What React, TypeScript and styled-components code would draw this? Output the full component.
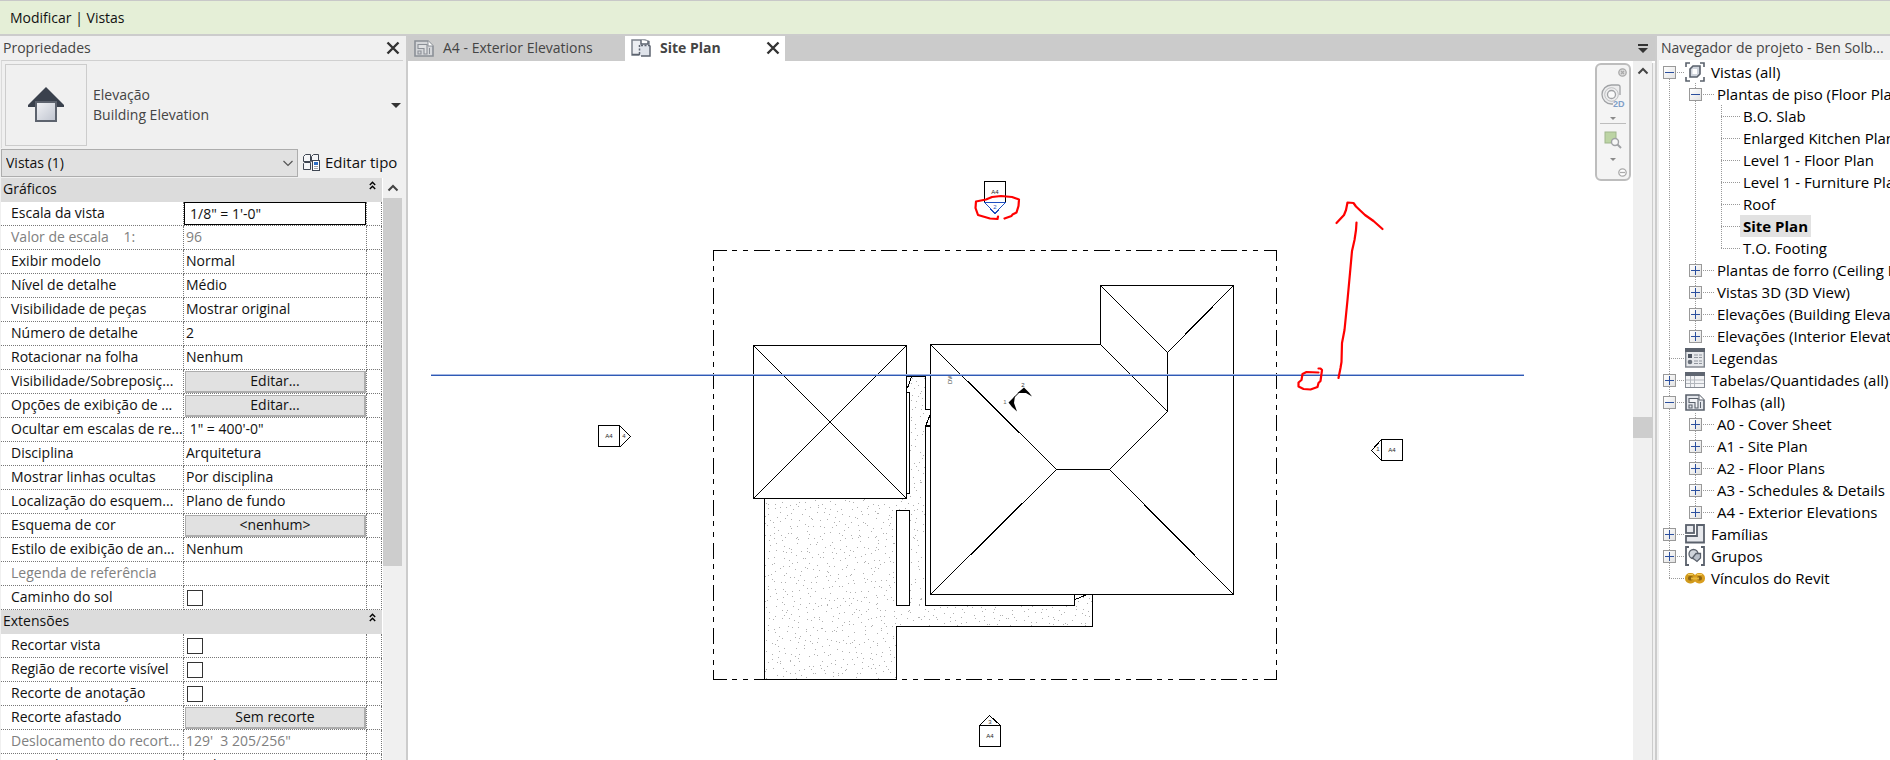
import React from "react";
import styled, { createGlobalStyle, css } from "styled-components";

const GlobalStyle = createGlobalStyle`
  *, *::before, *::after { box-sizing: border-box; }
  body { margin: 0; overflow: hidden; background: #f0f0f0; }
  body, button, input, select, table {
    font-family: "Open Sans", "Noto Sans", "Liberation Sans", sans-serif;
    font-size: 14px;
    line-height: 20px;
    color: #111;
  }
  button, input, select { margin: 0; padding: 0; border-radius: 0; }
  button { border: 0; background: none; }
  ul { list-style: none; margin: 0; padding: 0; }
  svg { display: block; flex: none; }
`;

/* ---------- shell ---------- */

const Shell = styled.div`
  display: flex;
  flex-direction: column;
  height: 100vh;
`;

const ContextBar = styled.header`
  flex: none;
  height: 36px;
  padding: 0 10px;
  display: flex;
  align-items: center;
  background: #e5efd7;
  border-top: 1px solid #c8c8c8;
  border-bottom: 2px solid #cccccc;
`;

const Workspace = styled.div`
  flex: 1;
  min-height: 0;
  display: flex;
`;

const PanelTitle = styled.h2`
  flex: none;
  margin: 0;
  height: 24px;
  display: flex;
  align-items: center;
  justify-content: space-between;
  font-size: 14px;
  font-weight: 400;
  color: #444;
  white-space: nowrap;
`;

const IconButton = styled.button`
  display: flex;
  align-items: center;
  justify-content: center;
  width: 20px;
  height: 20px;
`;

/* ---------- properties ---------- */

const Properties = styled.aside`
  flex: none;
  width: 408px;
  display: flex;
  flex-direction: column;
  background: #f0f0f0;
  border-right: 2px solid #cccccc;

  ${PanelTitle} { padding: 0 3px; }
`;

const TypeSelector = styled.div`
  flex: none;
  height: 88px;
  margin: 0 3px 0 1px;
  padding: 3px 0 0 3px;
  display: flex;
  align-items: flex-start;
  border-top: 1px solid #d0d0d0;
  border-left: 1px solid #dadada;
`;

const Preview = styled.div`
  width: 82px;
  height: 82px;
  display: flex;
  align-items: center;
  justify-content: center;
  border: 1px solid #cccccc;
`;

const TypeName = styled.div`
  flex: 1;
  padding: 21px 0 0 6px;
  color: #444;
`;

const TypeDrop = styled(IconButton)`
  margin-top: 31px;
  margin-right: -3px;
`;

const FilterRow = styled.div`
  flex: none;
  display: flex;
  align-items: center;
  height: 30px;
  padding: 1px 8px 1px 1px;
  gap: 5px;
`;

const SelectWrap = styled.label`
  position: relative;
  flex: 1;
  height: 28px;

  svg { position: absolute; right: 5px; top: 11px; pointer-events: none; }
`;

const FilterSelect = styled.select`
  appearance: none;
  width: 100%;
  height: 28px;
  padding: 0 24px 0 4px;
  background: #e1e1e1;
  border: 1px solid #adadad;
`;

const EditType = styled.button`
  display: flex;
  align-items: center;
  gap: 5px;
  width: 95px;
  padding-bottom: 2px;
  font-size: 15px;
  white-space: nowrap;
`;

const GridArea = styled.div`
  flex: 1;
  min-height: 0;
  display: flex;
  padding-left: 1px;
  padding-right: 4px;
  overflow: hidden;
`;

const GridScroll = styled.div`
  flex: 1;
  min-width: 0;
  overflow: hidden;
`;

const PropTable = styled.table`
  width: 100%;
  table-layout: fixed;
  border-collapse: separate;
  border-spacing: 0;
  background: #fff;
`;

const GroupCell = styled.th`
  height: 24px;
  padding: 0 6px 2px 2px;
  background: #dcdcdc;
  font-weight: 400;
  text-align: left;

  div { display: flex; justify-content: space-between; align-items: center; }
  button { width: auto; height: 16px; align-items: flex-start; }
`;

const dotted = css`
  border-right: 1px dotted #777;
  border-bottom: 1px dotted #777;
`;

const NameCell = styled.th<{ $muted?: boolean }>`
  ${dotted}
  height: 24px;
  padding: 0 0 2px 10px;
  font-weight: 400;
  text-align: left;
  white-space: pre;
  overflow: hidden;
  color: ${(p) => (p.$muted ? "#808080" : "#111")};
`;

const valuePadding = { text: "0 0 2px 2px", check: "0 0 0 2px", button: "0", input: "0" };

const ValueCell = styled.td<{ $muted?: boolean; $kind: Kind }>`
  ${dotted}
  height: 24px;
  padding: ${(p) => valuePadding[p.$kind]};
  white-space: pre;
  overflow: hidden;
  color: ${(p) => (p.$muted ? "#808080" : "#111")};
`;

const LinkCell = styled.td`
  ${dotted}
  height: 24px;
  padding: 0;
`;

const ScaleInput = styled.input`
  display: block;
  width: 100%;
  height: 23px;
  padding: 0 5px;
  border: 1px solid #000;
  outline: none;
  background: #fff;
`;

const CellButton = styled.button`
  display: block;
  width: calc(100% - 1px);
  height: 22px;
  margin-left: 1px;
  background: #e1e1e1;
  border: solid #adadad;
  border-width: 1px 2px 2px 1px;
  line-height: 18px;
`;

const CheckBox = styled.input`
  appearance: none;
  display: block;
  width: 16px;
  height: 16px;
  margin: 0 0 0 1px;
  border: 1px solid #333;
  background: #fff;
`;

/* ---------- scroll bars ---------- */

const ScrollTrack = styled.div`
  flex: none;
  width: 20px;
  display: flex;
  flex-direction: column;
  background: #f0f0f0;
  border-left: 1px solid #fff;
`;

const Thumb = styled.div<{ $grow?: number }>`
  min-height: 21px;
  flex: ${(p) => p.$grow ?? 0} 0 0;
  background: #cdcdcd;
`;

const TrackSpace = styled.div<{ $grow: number }>`
  flex: ${(p) => p.$grow} 0 0;
`;

/* ---------- drawing area ---------- */

const Documents = styled.main`
  flex: 1;
  min-width: 0;
  display: flex;
  flex-direction: column;
`;

const TabBar = styled.div`
  flex: none;
  height: 25px;
  display: flex;
  align-items: stretch;
  background: #cbcbcb;
`;

const Tab = styled.button<{ $active?: boolean }>`
  display: flex;
  align-items: center;
  gap: 9px;
  padding: 0 0 1px 6px;
  white-space: nowrap;
  color: #444;
  width: ${(p) => (p.$active ? "135px" : "217px")};
  background: ${(p) => (p.$active ? "#fff" : "transparent")};
  font-weight: ${(p) => (p.$active ? 700 : 400)};
`;

const TabClose = styled(IconButton)`
  width: 25px;
  height: 25px;
  padding-bottom: 1px;
  background: #fff;
`;

const TabMenu = styled(IconButton)`
  margin: 3px 2px 0 auto;
`;

const View = styled.div`
  flex: 1;
  min-height: 0;
  display: flex;
  background: #fff;
`;

const Canvas = styled.div`
  position: relative;
  flex: 1;
  min-width: 0;
`;

const Plan = styled.svg`
  width: 100%;
  height: 100%;

  text { font-family: "Liberation Sans", sans-serif; }
`;

const ViewEdge = styled.div`
  flex: none;
  width: 3px;
  margin-top: 2px;
  border-left: 1px solid #cccccc;
  background: #f0f0f0;
`;

const NavigationBar = styled.nav`
  position: absolute;
  top: 2px;
  right: 1px;
  width: 36px;
  height: 118px;
  padding: 3px 2px;
  display: flex;
  flex-direction: column;
  align-items: center;
  background: #f4f4f4;
  border: 2px solid #bdbdbd;
  border-radius: 6px;
`;

const NavButton = styled.button<{ $h: number; $end?: boolean }>`
  display: flex;
  justify-content: center;
  align-items: center;
  height: ${(p) => p.$h}px;
  flex: none;
  align-self: ${(p) => (p.$end ? "flex-end" : "center")};
`;

const NavRule = styled.hr`
  width: 26px;
  margin: 0;
  border: 0;
  border-top: 1px solid #bdbdbd;
`;

/* ---------- project browser ---------- */

const Browser = styled.aside`
  flex: none;
  width: 235px;
  display: flex;
  flex-direction: column;
  background: #f0f0f0;
  border-left: 2px solid #cccccc;
  overflow: hidden;

  ${PanelTitle} { padding-left: 4px; }
`;

const Tree = styled.ul`
  flex: 1;
  margin-left: 2px;
  padding-top: 1px;
  font-size: 15px;
  background: #fff;
`;

const TreeRow = styled.li`
  display: flex;
  align-items: center;
  height: 22px;
  white-space: nowrap;
`;

const vDots = "repeating-linear-gradient(to bottom, #999 0 1px, transparent 1px 2px)";
const hDots = "repeating-linear-gradient(to right, #999 0 1px, transparent 1px 2px)";

type GuideKind = "pass" | "tee" | "last" | "first";

const guideImage: Record<GuideKind, string> = {
  pass: `${vDots} 10px 0 / 1px 22px no-repeat`,
  tee: `${vDots} 10px 0 / 1px 22px no-repeat, ${hDots} 10px 11px / 100% 1px no-repeat`,
  last: `${vDots} 10px 0 / 1px 12px no-repeat, ${hDots} 10px 11px / 100% 1px no-repeat`,
  first: `${vDots} 10px 12px / 1px 10px no-repeat, ${hDots} 10px 11px / 100% 1px no-repeat`,
};

const Guide = styled.span<{ $kind: GuideKind; $wide?: boolean }>`
  flex: none;
  display: flex;
  align-items: center;
  width: ${(p) => (p.$wide ? 29 : 26)}px;
  height: 22px;
  padding-left: 4px;
  background: ${(p) => guideImage[p.$kind]};
`;

const Expander = styled.button`
  width: 13px;
  height: 13px;
  margin-top: 1px;
  display: flex;
  align-items: center;
  justify-content: center;
  border: 1px solid #999;
  background: linear-gradient(135deg, #fff, #e2e2e2);
`;

const NodeLabel = styled.span<{ $selected?: boolean; $root?: boolean }>`
  height: 22px;
  padding: 0 3px;
  margin-left: ${(p) => (p.$root ? 3 : 0)}px;
  line-height: 22px;
  color: #000;
  background: ${(p) => (p.$selected ? "#e2e2e2" : "transparent")};
  font-weight: ${(p) => (p.$selected ? 700 : 400)};
`;

/* ---------- icons ---------- */

const CloseIcon = () => (
  <svg width="14" height="14" viewBox="0 0 14 14" fill="none" stroke="#333" strokeWidth="2.4">
    <path d="M1.5 1.5 12.5 12.5M12.5 1.5 1.5 12.5" />
  </svg>
);

const CaretIcon = ({ size = 10, color = "#333" }: { size?: number; color?: string }) => (
  <svg width={size} height={size / 2} viewBox="0 0 10 5" fill={color}>
    <path d="M0 0H10L5 5Z" />
  </svg>
);

const UpIcon = () => (
  <svg width="12" height="8" viewBox="0 0 12 8" fill="none" stroke="#444" strokeWidth="2">
    <path d="M1.5 6.5 6 2 10.5 6.5" />
  </svg>
);

const CollapseIcon = () => (
  <svg width="7" height="9" viewBox="0 0 7 9" fill="none" stroke="#000" strokeWidth="1.4">
    <path d="M.8 4 3.5 1.3 6.2 4M.8 8 3.5 5.3 6.2 8" />
  </svg>
);

const HouseIcon = () => (
  <svg width="38" height="38" viewBox="0 0 38 38">
    <defs>
      <linearGradient id="wall" x1="0" y1="0" x2="1" y2="1">
        <stop offset="0" stopColor="#f2f3f6" />
        <stop offset="1" stopColor="#bfc4cf" />
      </linearGradient>
    </defs>
    <path d="M19 1 37 19V21H1V19Z" fill="#3a414d" />
    <rect x="9" y="16" width="20" height="19" fill="url(#wall)" stroke="#5d636e" strokeWidth="2" />
  </svg>
);

const EditTypeIcon = () => (
  <svg width="17" height="17" viewBox="0 0 17 17" fill="#f5f6f8" stroke="#3f4652" strokeWidth="1">
    <path d="M.5 2.5 2.5.5H7.5V7.5H.5ZM8.5 2.5 10.5.5H15.5V7.5H8.5ZM.5 9.5 1.5 8.5H7.5V15.5H.5Z" />
    <rect x="9.5" y="6.5" width="7" height="10" fill="#fff" />
    <rect x="11" y="8" width="4" height="3" fill="#2f6fc4" stroke="none" />
    <path d="M11.5 12.5H12.5M13.5 12.5H14.5M11.5 14.5H12.5M13.5 14.5H14.5" />
  </svg>
);

const SheetIcon = ({ muted }: { muted?: boolean }) => {
  const c = muted ? "#8b9097" : "#5a616c";
  return (
    <svg width="20" height="17" viewBox="0 0 20 17" fill="none">
      <path d="M1 1H14L19 6V16H1Z" fill={muted ? "#d4d6d9" : "#e4e7ec"} stroke={c} strokeWidth="1.6" />
      <path d="M14 1V6H19" fill="#fff" stroke={c} />
      <path d="M4 4.5H13V14H10V8.500H4Z" stroke={c} strokeWidth="1.1" fill={muted ? "#dfe1e3" : "#f3f4f7"} />
      <path d="M4 11H7V14H4Z" stroke={c} strokeWidth="1.1" />
      <path d="M15.5 8V14" stroke={c} />
    </svg>
  );
};

const PlanIcon = () => (
  <svg width="20" height="18" viewBox="0 0 20 18" fill="#f1f3f6" stroke="#5d6470" strokeWidth="1.5">
    <path d="M1 1H14L18 2.5V16H1Z" stroke="#7b818b" fill="#eceef2" />
    <path d="M8 5.5H19V17H8Z" fill="#dfe3ea" stroke="none" />
    <path d="M1 15.5H9M10 17H19V6.5" fill="none" />
    <path d="M10 1V5H17V2" fill="#fff" />
    <path d="M8.5 6V16" strokeDasharray="2 1.5" />
    <path d="M10 6.5H19" strokeDasharray="2 1.5" />
  </svg>
);

const ViewsIcon = () => (
  <svg width="20" height="20" viewBox="0 0 20 20" fill="none" stroke="#5a616c" strokeWidth="1.6">
    <path d="M1 5V1H5M15 1H19V5M19 15V19H15M5 19H1V15" />
    <path d="M5 7 8 4H15V12L12 15H5Z" fill="#cfd4dc" />
    <path d="M7.5 7H12V12H7.5Z" fill="#fff" stroke="none" />
  </svg>
);

const LegendIcon = () => (
  <svg width="20" height="20" viewBox="0 0 20 20">
    <rect x=".7" y="1" width="18.6" height="18" fill="#e6e8eb" stroke="#7c828b" strokeWidth="1.4" />
    <path d="M0 0H20V4H0Z" fill="#5a616c" />
    <rect x="3" y="6" width="4" height="4" fill="#4d5460" />
    <circle cx="5" cy="14" r="2.3" fill="#6b727c" />
    <path d="M9 7H17M9 9.5H17M9 13H17M9 15.5H17" stroke="#90959d" strokeDasharray="4 1" />
  </svg>
);

const ScheduleIcon = () => (
  <svg width="20" height="16" viewBox="0 0 20 16">
    <rect x=".5" y=".5" width="19" height="15" fill="#f3f4f6" stroke="#858a92" />
    <path d="M0 0H20V4H0Z" fill="#5f6671" />
    <path d="M5.5 4V15M9.5 4V15M1 8H19M1 11.5H19" stroke="#b3b7bd" />
  </svg>
);

const FamilyIcon = () => (
  <svg width="20" height="20" viewBox="0 0 20 20" fill="#e7e9ed" stroke="#5a616c" strokeWidth="1.8">
    <rect x="1" y="1" width="8" height="8" />
    <path d="M12 1H19V18.5H1V12H12Z" />
  </svg>
);

const GroupIcon = () => (
  <svg width="20" height="20" viewBox="0 0 20 20" fill="none" stroke="#5a616c" strokeWidth="1.8">
    <path d="M4 1H1V19H4M16 1H19V19H16" />
    <circle cx="8.5" cy="8" r="4.5" fill="#cfd4dc" strokeWidth="1.3" />
    <path d="M11 7.5H15.5V12L12 15.5 7.500 12Z" fill="#b9c0cb" strokeWidth="1.3" />
  </svg>
);

const LinkIcon = () => (
  <svg width="20" height="11" viewBox="0 0 20 11" fill="none">
    <rect x="1.5" y="1.5" width="8" height="7.5" rx="3.5" fill="#8d6412" stroke="#d09a1c" strokeWidth="3" />
    <rect x="10.5" y="1.5" width="8" height="7.5" rx="3.5" fill="#8d6412" stroke="#d99e1f" strokeWidth="3" />
    <path d="M6 5.5H14" stroke="#e8b93a" strokeWidth="2" />
    <path d="M3 1.5H8M12 1.5H17" stroke="#f4cf5d" />
  </svg>
);

const Sign = ({ open }: { open: boolean }) => (
  <svg width="11" height="11" viewBox="0 0 11 11" stroke="#2b4f9e" strokeWidth="1" shapeRendering="crispEdges">
    <path d={open ? "M1 5.5H10" : "M1 5.5H10M5.5 1V10"} />
  </svg>
);

const TabMenuIcon = () => (
  <svg width="10" height="10" viewBox="0 0 10 10" fill="#333">
    <path d="M0 0H10V2H0ZM0 4H10L5 9Z" />
  </svg>
);

const RoundIcon = ({ minus }: { minus?: boolean }) => (
  <svg width="9" height="9" viewBox="0 0 9 9" fill="none" stroke="#aaa" strokeWidth="1.3">
    <circle cx="4.5" cy="4.5" r="3.7" fill={minus ? "#fff" : "#ddd"} />
    <path d={minus ? "M2 4.5H7" : "M3 3 6 6M6 3 3 6"} />
  </svg>
);

const WheelIcon = () => (
  <svg width="24" height="24" viewBox="0 0 24 24" fill="none" stroke="#a0a2a5" strokeWidth="1.3">
    <path d="M19 11V3Q19 1 17 1H10.500A9.500 9.500 0 1 0 10.500 20H12" fill="#ededee" />
    <circle cx="10.500" cy="10.500" r="4" fill="#fafafa" />
    <circle cx="10.500" cy="10.500" r="6.800" strokeWidth=".6" />
    <text x="12" y="23" fill="#7f9fc8" stroke="none" fontFamily="Liberation Sans" fontWeight="700" fontSize="9">2D</text>
  </svg>
);

const ZoomRegionIcon = () => (
  <svg width="18" height="18" viewBox="0 0 18 18" fill="none">
    <rect x="1" y="1" width="11" height="11" fill="#bcd4a4" stroke="#9fb68c" />
    <circle cx="11" cy="11" r="3.5" fill="#f7f7f7" stroke="#a0a2a5" strokeWidth="1.4" />
    <path d="M13.5 13.5 17 17" stroke="#a0a2a5" strokeWidth="2" />
  </svg>
);

/* ---------- data ---------- */

type Kind = "text" | "input" | "button" | "check";
type Prop = { name: string; value?: string; kind?: Kind; muted?: boolean };

const groups: { title: string; items: Prop[] }[] = [
  {
    title: "Gráficos",
    items: [
      { name: "Escala da vista", value: "1/8\" = 1'-0\"", kind: "input" },
      { name: "Valor de escala    1:", value: "96", muted: true },
      { name: "Exibir modelo", value: "Normal" },
      { name: "Nível de detalhe", value: "Médio" },
      { name: "Visibilidade de peças", value: "Mostrar original" },
      { name: "Número de detalhe", value: "2" },
      { name: "Rotacionar na folha", value: "Nenhum" },
      { name: "Visibilidade/Sobreposiç...", value: "Editar...", kind: "button" },
      { name: "Opções de exibição de ...", value: "Editar...", kind: "button" },
      { name: "Ocultar em escalas de re...", value: " 1\" = 400'-0\"" },
      { name: "Disciplina", value: "Arquitetura" },
      { name: "Mostrar linhas ocultas", value: "Por disciplina" },
      { name: "Localização do esquem...", value: "Plano de fundo" },
      { name: "Esquema de cor", value: "<nenhum>", kind: "button" },
      { name: "Estilo de exibição de an...", value: "Nenhum" },
      { name: "Legenda de referência", value: "", muted: true },
      { name: "Caminho do sol", kind: "check" },
    ],
  },
  {
    title: "Extensões",
    items: [
      { name: "Recortar vista", kind: "check" },
      { name: "Região de recorte visível", kind: "check" },
      { name: "Recorte de anotação", kind: "check" },
      { name: "Recorte afastado", value: "Sem recorte", kind: "button" },
      { name: "Deslocamento do recort...", value: "129'  3 205/256\"", muted: true },
      { name: "Caixa de escopo", value: "Nenhum" },
    ],
  },
];

type Node = {
  label: string;
  guides: GuideKind[];
  open?: boolean;
  icon?: React.ReactNode;
  selected?: boolean;
};

const nodes: Node[] = [
  { label: "Vistas (all)", guides: ["first"], open: true, icon: <ViewsIcon /> },
  { label: "Plantas de piso (Floor Plan)", guides: ["pass", "tee"], open: true },
  { label: "B.O. Slab", guides: ["pass", "pass", "tee"] },
  { label: "Enlarged Kitchen Plan", guides: ["pass", "pass", "tee"] },
  { label: "Level 1 - Floor Plan", guides: ["pass", "pass", "tee"] },
  { label: "Level 1 - Furniture Plan", guides: ["pass", "pass", "tee"] },
  { label: "Roof", guides: ["pass", "pass", "tee"] },
  { label: "Site Plan", guides: ["pass", "pass", "tee"], selected: true },
  { label: "T.O. Footing", guides: ["pass", "pass", "last"] },
  { label: "Plantas de forro (Ceiling Plan)", guides: ["pass", "tee"], open: false },
  { label: "Vistas 3D (3D View)", guides: ["pass", "tee"], open: false },
  { label: "Elevações (Building Elevation)", guides: ["pass", "tee"], open: false },
  { label: "Elevações (Interior Elevation)", guides: ["pass", "last"], open: false },
  { label: "Legendas", guides: ["tee"], icon: <LegendIcon /> },
  { label: "Tabelas/Quantidades (all)", guides: ["tee"], open: false, icon: <ScheduleIcon /> },
  { label: "Folhas (all)", guides: ["tee"], open: true, icon: <SheetIcon /> },
  { label: "A0 - Cover Sheet", guides: ["pass", "tee"], open: false },
  { label: "A1 - Site Plan", guides: ["pass", "tee"], open: false },
  { label: "A2 - Floor Plans", guides: ["pass", "tee"], open: false },
  { label: "A3 - Schedules & Details", guides: ["pass", "tee"], open: false },
  { label: "A4 - Exterior Elevations", guides: ["pass", "last"], open: false },
  { label: "Famílias", guides: ["tee"], open: false, icon: <FamilyIcon /> },
  { label: "Grupos", guides: ["tee"], open: false, icon: <GroupIcon /> },
  { label: "Vínculos do Revit", guides: ["last"], icon: <LinkIcon /> },
];

/* ---------- site plan ---------- */

// Concrete hatch: one dot per cell of a jittered grid, from a fixed seed.
function stipple(x0: number, y0: number, x1: number, y1: number, step: number) {
  let seed = 7;
  const next = () => {
    seed = (seed * 1103515245 + 12345) % 2147483648;
    return seed / 2147483648;
  };
  let d = "";
  for (let y = y0; y < y1; y += step) {
    for (let x = x0; x < x1; x += step) {
      d += `M${Math.floor(x + next() * step)} ${Math.floor(y + next() * step)}h1v1h-1z`;
    }
  }
  return d;
}

const hatch = stipple(760, 376, 1094, 680, 6.2);
const slab =
  "M764 498H906V493H909V392H906V376H925V605H1074V594H1092V626H896V679H764Z";

type MarkerProps = {
  x: number;
  y: number;
  tip: string;
  tipColor?: string;
  num: string;
  nx: number;
  ny: number;
};

const Marker = ({ x, y, tip, tipColor = "#000", num, nx, ny }: MarkerProps) => (
  <g>
    <rect x={x + 0.5} y={y + 0.5} width="21" height="21" fill="none" stroke="#000" shapeRendering="crispEdges" />
    <path d={tip} fill="none" stroke={tipColor} shapeRendering="crispEdges" />
    <text x={x + 11} y={y + 13} fontSize="6" textAnchor="middle" fill="#222">A4</text>
    <text x={nx} y={ny} fontSize="6" textAnchor="middle" fill={tipColor === "#000" ? "#333" : tipColor}>{num}</text>
  </g>
);

const SitePlan = () => (
  <Plan viewBox="408 61 1224 699" role="img" aria-label="Site Plan">
    <clipPath id="slab">
      <path d={slab} />
    </clipPath>
    <path d={hatch} fill="#b0b0b0" clipPath="url(#slab)" shapeRendering="crispEdges" />

    <g fill="none" stroke="#000" shapeRendering="crispEdges">
      <g strokeDasharray="16 5 5 6 5 5.5">
        <path d="M713 250.5H1277M713 679.5H1277" strokeDashoffset="2" />
        <path d="M713.5 250V680M1276.5 250V680" strokeDashoffset="5" />
      </g>
      <path d="M764.5 498V679.5H896.5V626.5H1092.5V594" />
      <rect x="896.5" y="510.5" width="13" height="95" fill="#fff" />
      <path d="M906 376.5H925.5V409.5H930M906 392.5H909.5V493.5H906" />
      <path d="M925.5 425V605.5H1074.5V594" />
      <path d="M925 426H931" strokeWidth="2" />
      <path d="M907.5 388 911.5 377M926 425 930 415M1075 599.5 1086 595" />
      <rect x="753.5" y="345.5" width="153" height="153" fill="#fff" />
      <path d="M753.5 345.5 906.5 498.5M906.5 345.5 753.5 498.5" />
      <path d="M930.5 344.5H1100.5V285.5H1233.5V594.5H930.5Z" fill="#fff" />
      <path d="M1100.5 285.5 1167.5 352.5 1233.5 285.5M1167.5 352.5V411.5M1100.5 344.5 1167.5 411.5 1109.5 469.5H1056.5L930.5 344.5M930.5 594.5 1056.5 469.5M1109.5 469.5 1233.5 594.5" />
    </g>

    <path d="M1024 387.5 1017.500 393H1026L1032 396.500 1029 392.500ZM1008.500 402.500 1015 396 1014 403 1017 411.500 1012 407Z" fill="#000" />
    <path d="M1014 397.5 1019 392.5" stroke="#000" />
    <text x="1023" y="387" fontSize="6" textAnchor="middle" fill="#333">2</text>
    <text x="1005" y="404" fontSize="6" textAnchor="middle" fill="#666">1</text>
    <text transform="translate(952 379) rotate(-90)" fontSize="6" textAnchor="middle" fill="#444">DW</text>

    <g shapeRendering="crispEdges">
      <path d="M431 374.5H1524" stroke="#a3b6e2" />
      <path d="M431 375.5H1524" stroke="#2f5ab5" />
    </g>

    <Marker x={984} y={181} tip="M984.5 202.5H1005.5L995 213.5Z" tipColor="#1d4fc0" num="2" nx={995} ny={209} />
    <Marker x={598} y={425} tip="M619.5 425.5 630.5 436.5 619.5 447.5" num="4" nx={624} ny={438} />
    <Marker x={1381} y={439} tip="M1381.5 439.5 1371.5 450.5 1381.5 460.5" num="1" nx={1378} ny={451} />
    <Marker x={979} y={725} tip="M979.5 725.5 989.5 715.5 1000.5 725.5" num="3" nx={990} ny={724} />

    <g fill="none" stroke="#f00" strokeWidth="2.2" strokeLinecap="round" strokeLinejoin="round">
      <path d="M998 216.5 997.5 219 990 218.5 978 215 975.5 208 976 201.5 986 199.5 992 197 1001 196 1012 197 1019 199.5 1018.5 206 1016.5 212.5 1012.5 214.5 1011.5 216 1004.5 218.5" />
      <path d="M1318.5 372.5 1306.5 372 1302.5 374 1301.5 380 1298.5 382.5 1298.5 386.5 1303.5 389 1310.5 389.5 1317.5 387 1318.5 383 1320.5 381 1322 370 1320.5 368.5 1318.5 368.5" />
      <path d="M1356.5 222.5 1356 230 1354.5 240 1352 251 1350 273 1347.5 300 1344.5 330 1342 343 1341.5 362 1340.5 368 1338.5 378" />
      <path d="M1336.5 223 1344 215 1346 210 1347.5 202.5 1353.5 203 1356 206.5 1365 215 1373.5 221 1382.5 229" />
    </g>
  </Plan>
);

/* ---------- components ---------- */

const PropertyValue = ({ item, id }: { item: Prop; id: string }) => {
  switch (item.kind) {
    case "input":
      return <ScaleInput id={id} defaultValue={item.value} />;
    case "button":
      return <CellButton id={id} type="button">{item.value}</CellButton>;
    case "check":
      return <CheckBox id={id} type="checkbox" />;
    default:
      return <>{item.value}</>;
  }
};

const PropertyGrid = () => (
  <PropTable>
    <colgroup>
      <col style={{ width: 183 }} />
      <col />
      <col style={{ width: 15 }} />
    </colgroup>
    {groups.map((group, g) => (
      <tbody key={group.title}>
        <tr>
          <GroupCell colSpan={3} scope="rowgroup">
            <div>
              {group.title}
              <IconButton type="button" aria-label={`Recolher ${group.title}`}><CollapseIcon /></IconButton>
            </div>
          </GroupCell>
        </tr>
        {group.items.map((item, i) => {
          const id = `prop-${g}-${i}`;
          return (
            <tr key={item.name}>
              <NameCell scope="row" $muted={item.muted}>
                {item.kind ? <label htmlFor={id}>{item.name}</label> : item.name}
              </NameCell>
              <ValueCell $muted={item.muted} $kind={item.kind ?? "text"}>
                <PropertyValue item={item} id={id} />
              </ValueCell>
              <LinkCell />
            </tr>
          );
        })}
      </tbody>
    ))}
  </PropTable>
);

const TreeItem = ({ node }: { node: Node }) => {
  const root = node.guides.length === 1;
  return (
    <TreeRow>
      {node.guides.map((kind, i) => {
        const last = i === node.guides.length - 1;
        return (
          <Guide key={i} $kind={kind} $wide={last && !root}>
            {last && node.open !== undefined && (
              <Expander type="button" aria-label={node.label} aria-expanded={node.open}>
                <Sign open={node.open} />
              </Expander>
            )}
          </Guide>
        );
      })}
      {node.icon}
      <NodeLabel $selected={node.selected} $root={root}>{node.label}</NodeLabel>
    </TreeRow>
  );
};

export default function App() {
  return (
    <>
      <GlobalStyle />
      <Shell>
        <ContextBar>Modificar | Vistas</ContextBar>
        <Workspace>
          <Properties>
            <PanelTitle>
              Propriedades
              <IconButton type="button" aria-label="Fechar propriedades"><CloseIcon /></IconButton>
            </PanelTitle>
            <TypeSelector>
              <Preview><HouseIcon /></Preview>
              <TypeName>
                <div>Elevação</div>
                <div>Building Elevation</div>
              </TypeName>
              <TypeDrop type="button" aria-label="Tipo"><CaretIcon /></TypeDrop>
            </TypeSelector>
            <FilterRow>
              <SelectWrap>
                <FilterSelect aria-label="Filtro">
                  <option>Vistas (1)</option>
                </FilterSelect>
                <svg width="10" height="7" viewBox="0 0 10 7" fill="none" stroke="#555" strokeWidth="1.2">
                  <path d="M.5 1 5 5.5 9.5 1" />
                </svg>
              </SelectWrap>
              <EditType type="button"><EditTypeIcon />Editar tipo</EditType>
            </FilterRow>
            <GridArea>
              <GridScroll><PropertyGrid /></GridScroll>
              <ScrollTrack>
                <IconButton type="button" aria-label="Rolar para cima"><UpIcon /></IconButton>
                <Thumb $grow={367} />
                <TrackSpace $grow={194} />
              </ScrollTrack>
            </GridArea>
          </Properties>

          <Documents>
            <TabBar>
              <Tab type="button"><SheetIcon muted />A4 - Exterior Elevations</Tab>
              <Tab type="button" $active><PlanIcon />Site Plan</Tab>
              <TabClose type="button" aria-label="Fechar Site Plan"><CloseIcon /></TabClose>
              <TabMenu type="button" aria-label="Vistas abertas"><TabMenuIcon /></TabMenu>
            </TabBar>
            <View>
              <Canvas>
                <SitePlan />
                <NavigationBar>
                  <NavButton type="button" aria-label="Fechar" $h={8} $end><RoundIcon /></NavButton>
                  <NavButton type="button" aria-label="Roda de navegação 2D" $h={40}><WheelIcon /></NavButton>
                  <NavButton type="button" aria-label="Opções da roda" $h={4}><CaretIcon size={6} color="#8a8a8a" /></NavButton>
                  <TrackSpace $grow={1} />
                  <NavRule />
                  <NavButton type="button" aria-label="Zoom na região" $h={32}><ZoomRegionIcon /></NavButton>
                  <NavButton type="button" aria-label="Opções de zoom" $h={6}><CaretIcon size={6} color="#8a8a8a" /></NavButton>
                  <TrackSpace $grow={2} />
                  <NavButton type="button" aria-label="Personalizar" $h={8} $end><RoundIcon minus /></NavButton>
                </NavigationBar>
              </Canvas>
              <ScrollTrack>
                <IconButton type="button" aria-label="Rolar vista para cima"><UpIcon /></IconButton>
                <TrackSpace $grow={336} />
                <Thumb />
                <TrackSpace $grow={322} />
              </ScrollTrack>
              <ViewEdge />
            </View>
          </Documents>

          <Browser>
            <PanelTitle>Navegador de projeto - Ben Solb...</PanelTitle>
            <Tree>
              {nodes.map((node) => (
                <TreeItem key={node.label} node={node} />
              ))}
            </Tree>
          </Browser>
        </Workspace>
      </Shell>
    </>
  );
}
